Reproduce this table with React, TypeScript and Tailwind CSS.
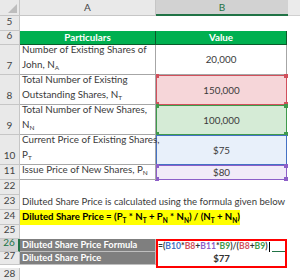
import React from 'react';

const FONT = { fontFamily: 'Lato, "Liberation Sans", sans-serif' };

const Sub: React.FC<{ children: React.ReactNode }> = ({ children }) => (
  <span className="text-[6.5px] relative top-[2px]">{children}</span>
);

const RowHead: React.FC<{ n: string; active?: boolean }> = ({ n, active }) => (
  <div
    className={`w-[20px] shrink-0 flex items-end justify-center pb-[1px] border-b border-r text-[10px] ${
      active
        ? 'bg-[#d2d2d2] border-b-[#c6c6c6] border-r-[#217346] border-r-2 text-[#217346]'
        : 'bg-[#e9e9e9] border-[#c6c6c6] text-[#444]'
    }`}
  >
    {n}
  </div>
);

// Excel range highlight colours for the formula references
const refStyles: Record<string, string> = {
  B8: 'bg-[#f6d6d9] border-[#d1505c]',
  B9: 'bg-[#d5ebd6] border-[#3f9a4c]',
  B10: 'bg-[#e8f0fa] border-[#4472c4]',
  B11: 'bg-[#f1ebf8] border-[#8d5fc8]',
};

const Corner: React.FC<{ pos: string; color: string }> = ({ pos, color }) => (
  <span className={`absolute w-[4px] h-[4px] ${pos} ${color}`} />
);

const DataRow: React.FC<{
  n: string;
  h: string;
  lines: React.ReactNode[];
  value: string;
  ref?: string;
  corner?: string;
}> = ({ n, h, lines, value, ref: r, corner }) => (
  <div className={`flex ${h}`}>
    <RowHead n={n} />
    <div className="w-[136px] shrink-0 flex flex-col justify-end pl-[2px] pb-[1px] border-b border-r border-[#a6a6a6] text-[9.8px] leading-[15px] text-[#3a3a3a] whitespace-nowrap relative z-10">
      {lines.map((l, i) => (
        <div key={i}>{l}</div>
      ))}
    </div>
    <div
      className={`w-[131px] shrink-0 flex items-center justify-center text-[9.8px] text-[#3a3a3a] relative ${
        r ? `${refStyles[r]} border` : 'border-b border-r border-[#a6a6a6]'
      }`}
    >
      {value}
      {r && corner && (
        <>
          <Corner pos="-top-[2px] -left-[2px]" color={corner} />
          <Corner pos="-top-[2px] -right-[2px]" color={corner} />
          <Corner pos="-bottom-[2px] -left-[2px]" color={corner} />
          <Corner pos="-bottom-[2px] -right-[2px]" color={corner} />
        </>
      )}
    </div>
    <div className="flex-1" />
  </div>
);

const PlainRow: React.FC<{ n: string; h: string; children?: React.ReactNode; active?: boolean }> = ({
  n,
  h,
  children,
  active,
}) => (
  <div className={`flex ${h}`}>
    <RowHead n={n} active={active} />
    <div className="flex-1 flex items-end">{children}</div>
  </div>
);

export default function App() {
  return (
    <div className="w-[300px] h-[280px] bg-white overflow-hidden" style={FONT}>
      {/* Column header */}
      <div className="flex h-[16px]">
        <div className="w-[20px] shrink-0 bg-[#e9e9e9] border-b border-r border-[#c6c6c6] relative">
          <span className="absolute right-[2px] bottom-[2px] w-0 h-0 border-l-[9px] border-l-transparent border-b-[9px] border-b-[#bdbdbd]" />
        </div>
        <div className="w-[136px] shrink-0 bg-[#e9e9e9] border-b border-r border-[#c6c6c6] flex items-center justify-center text-[10px] text-[#444]">
          A
        </div>
        <div className="w-[132px] shrink-0 bg-[#d2d2d2] border-b-2 border-[#217346] flex items-center justify-center text-[10px] text-[#217346]">
          B
        </div>
        <div className="flex-1 bg-[#ebebeb] border-b border-[#d0d0d0]" />
      </div>

      <PlainRow n="5" h="h-[15px]" />

      {/* Header row */}
      <div className="flex h-[14px]">
        <RowHead n="6" />
        <div className="w-[136px] shrink-0 bg-[#00b050] border-b border-r border-[#0a5a2a] flex items-center justify-center text-[9.8px] font-bold text-white">
          Particulars
        </div>
        <div className="w-[131px] shrink-0 bg-[#00b050] border-b border-r border-[#0a5a2a] flex items-center justify-center text-[9.8px] font-bold text-white">
          Value
        </div>
        <div className="flex-1" />
      </div>

      <DataRow
        n="7"
        h="h-[30px]"
        lines={[
          'Number of Existing Shares of',
          <>
            John, N<Sub>A</Sub>
          </>,
        ]}
        value="20,000"
      />
      <DataRow
        n="8"
        h="h-[30px]"
        lines={[
          'Total Number of Existing',
          <>
            Outstanding Shares, N<Sub>T</Sub>
          </>,
        ]}
        value="150,000"
        ref="B8"
        corner="bg-[#d1505c]"
      />
      <DataRow
        n="9"
        h="h-[30px]"
        lines={[
          'Total Number of New Shares,',
          <>
            N<Sub>N</Sub>
          </>,
        ]}
        value="100,000"
        ref="B9"
        corner="bg-[#3f9a4c]"
      />
      <DataRow
        n="10"
        h="h-[30px]"
        lines={[
          'Current Price of Existing Shares,',
          <>
            P<Sub>T</Sub>
          </>,
        ]}
        value="$75"
        ref="B10"
      />
      <DataRow
        n="11"
        h="h-[15px]"
        lines={[
          <>
            Issue Price of New Shares, P<Sub>N</Sub>
          </>,
        ]}
        value="$80"
        ref="B11"
        corner="bg-[#8d5fc8]"
      />

      <PlainRow n="22" h="h-[15px]" />
      <PlainRow n="23" h="h-[15px]">
        <span className="pl-[2px] pb-[1px] text-[9.6px] text-[#3a3a3a] whitespace-nowrap">
          Diluted Share Price is calculated using the formula given below
        </span>
      </PlainRow>
      <PlainRow n="24" h="h-[15px]">
        <span className="h-full w-[220px] bg-[#ffff00] pl-[2px] flex items-end pb-[1px] text-[9.6px] font-bold text-black whitespace-nowrap">
          Diluted Share Price = (P<Sub>T</Sub>&nbsp;* N<Sub>T</Sub>&nbsp;+ P<Sub>N</Sub>&nbsp;* N<Sub>N</Sub>) / (N
          <Sub>T</Sub>&nbsp;+ N<Sub>N</Sub>)
        </span>
      </PlainRow>
      <PlainRow n="25" h="h-[14px]" />

      {/* Result rows with red outline on B26:B27 */}
      <div className="flex">
        <div className="flex flex-col">
          <div className="flex h-[13px]">
            <RowHead n="26" active />
            <div className="w-[136px] shrink-0 bg-[#7f7f7f] border-b border-r border-[#bfbfbf] flex items-center pl-[2px] text-[9.3px] font-bold text-white whitespace-nowrap">
              Diluted Share Price Formula
            </div>
          </div>
          <div className="flex h-[13px]">
            <RowHead n="27" />
            <div className="w-[136px] shrink-0 bg-[#7f7f7f] border-b border-r border-[#bfbfbf] flex items-center pl-[2px] text-[9.3px] font-bold text-white whitespace-nowrap">
              Diluted Share Price
            </div>
          </div>
        </div>
        <div className="w-[131px] shrink-0 border-2 border-[#ff0000] flex flex-col">
          <div className="h-[11px] flex items-center text-[8.6px] font-bold whitespace-nowrap text-[#333]">
            =(<span className="text-[#4472c4]">B10</span>*<span className="text-[#d1505c]">B8</span>+
            <span className="text-[#8d5fc8]">B11</span>*<span className="text-[#3f9a4c]">B9</span>)/(
            <span className="text-[#d1505c]">B8</span>+<span className="text-[#3f9a4c]">B9</span>)
            <span className="inline-block w-px h-[10px] bg-black ml-[1px]" />
            <span className="flex-1 self-end h-px bg-[#217346] ml-[2px]" />
          </div>
          <div className="flex-1 flex items-center justify-center text-[9.6px] font-bold text-[#333]">$77</div>
        </div>
        <div className="flex-1" />
      </div>

      <PlainRow n="28" h="h-[15px]" />
    </div>
  );
}
